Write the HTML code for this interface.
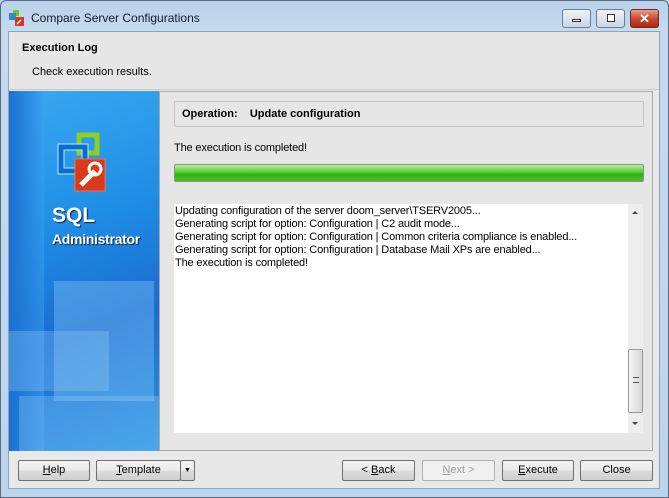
<!DOCTYPE html>
<html><head><style>
*{margin:0;padding:0;box-sizing:border-box}
body{width:669px;height:498px;overflow:hidden;font-family:"Liberation Sans",sans-serif;font-size:11px;color:#000;position:relative;
background:linear-gradient(180deg,#b9d1ea 0,#c6daee 30px,#bcd4ec 100%);}
.frame{position:absolute;left:0;top:0;width:669px;height:498px;border:1px solid #5a6a80;border-radius:6px 6px 0 0}
.title{position:absolute;left:31px;top:11px;font-size:12px;color:#101a28}
.wb{position:absolute;top:9px;height:19px;border:1px solid #6c7c90;border-radius:3px;background:linear-gradient(#eef3f9,#c9d6e6)}
.client{position:absolute;left:8px;top:31px;width:652px;height:458px;background:#e8e8e8;border:1px solid #8ea3bd}
.hdr{position:absolute;left:0;top:0;width:650px;height:58px;background:#e6e6e6;border-bottom:1px solid #c8c8c8}
.side{position:absolute;left:0;top:59px;width:150px;height:360px;background:linear-gradient(160deg,#3aa8f0 0%,#1f90e6 35%,#1a6cd0 65%,#2a94e4 100%);overflow:hidden}
.main{position:absolute;left:150px;top:59px;width:494px;height:360px;border:1px solid #a8a8a8;background:#e6e6e6}
.btn{position:absolute;top:428px;height:21px;border:1px solid #707070;border-radius:2px;background:linear-gradient(#f2f2f2 0,#ebebeb 50%,#dcdcdc 51%,#cfcfcf 100%);text-align:center;line-height:19px;font-size:11px}
.dis{color:#a0a0a0;border-color:#b0b0b0;background:#f0f0f0}
.log{letter-spacing:-0.15px}
</style></head><body>
<div class="frame"></div>
<svg style="position:absolute;left:9px;top:10px" width="16" height="16"><rect x="4" y="0" width="6" height="6" fill="#7cc020"/><rect x="0" y="3" width="7" height="7" fill="#2a8ad8"/><rect x="6" y="7" width="9" height="9" fill="#d83820"/><path d="M8 14l4-4" stroke="#fff" stroke-width="1.5"/></svg>
<div class="title">Compare Server Configurations</div>
<div class="wb" style="left:562px;width:29px"><div style="position:absolute;left:9px;top:9px;width:9px;height:3px;border:1px solid #333;background:#fff"></div></div>
<div class="wb" style="left:596px;width:29px"><div style="position:absolute;left:10px;top:4px;width:8px;height:8px;border:1px solid #333;background:#fff"></div></div>
<div class="wb" style="left:630px;width:29px;border-color:#6b2a20;background:linear-gradient(#e8a090,#c84a30 50%,#b02810)"><div style="color:#fff;font-weight:bold;font-size:13px;text-align:center;line-height:17px">✕</div></div>
<div class="client">
<div class="hdr">
<div style="position:absolute;left:13px;top:10px;font-weight:bold;font-size:11px">Execution Log</div>
<div style="position:absolute;left:23px;top:34px">Check execution results.</div>
</div>
<div class="side">
<div style="position:absolute;left:0;top:0;width:35px;height:360px;background:linear-gradient(90deg,#1a70d0,rgba(60,160,240,.5))"></div>
<div style="position:absolute;left:45px;top:190px;width:100px;height:120px;background:rgba(150,210,250,.35)"></div>
<div style="position:absolute;left:0;top:240px;width:100px;height:60px;background:rgba(150,210,250,.3)"></div>
<div style="position:absolute;left:10px;top:305px;width:140px;height:55px;background:rgba(150,210,250,.3)"></div>
<svg style="position:absolute;left:44px;top:40px" width="58" height="64"><rect x="26" y="4" width="18" height="18" fill="none" stroke="#8ecf20" stroke-width="5"/><rect x="8" y="16" width="24" height="24" fill="none" stroke="#bfe6ff" stroke-width="7"/><rect x="8" y="16" width="24" height="24" fill="none" stroke="#0a6ed0" stroke-width="5"/><rect x="22" y="28" width="30" height="32" fill="#d83a1a" stroke="#f07050" stroke-width="1"/><path d="M28 54l14-14" stroke="#fff" stroke-width="5"/><circle cx="42" cy="38" r="6" fill="none" stroke="#fff" stroke-width="3"/></svg>
<div style="position:absolute;left:43px;top:113px;color:#fff;font-weight:bold;font-size:21px;text-shadow:1px 1px 1px #124">SQL</div>
<div style="position:absolute;left:43px;top:140px;color:#fff;font-weight:bold;font-size:14px;letter-spacing:-.3px;text-shadow:1px 1px 1px #124">Administrator</div>
</div>
<div class="main">
<div style="position:absolute;left:14px;top:9px;width:470px;height:26px;border:1px solid #c4c4c4;border-radius:2px;background:#e6e6e6;font-weight:bold;line-height:24px;padding-left:7px">Operation:&nbsp;&nbsp;&nbsp;&nbsp;Update configuration</div>
<div style="position:absolute;left:14px;top:50px" class="log">The execution is completed!</div>
<div style="position:absolute;left:14px;top:72px;width:470px;height:18px;border:1px solid #909090;border-radius:2px;background:linear-gradient(#b8f0a0,#50d030 45%,#30b010 60%,#50c030)"></div>
<div class="log" style="position:absolute;left:14px;top:112px;width:469px;height:229px;background:#fff;line-height:13px;padding:1px 0 0 1px">
Updating configuration of the server doom_server\TSERV2005...<br>Generating script for option: Configuration | C2 audit mode...<br>Generating script for option: Configuration | Common criteria compliance is enabled...<br>Generating script for option: Configuration | Database Mail XPs are enabled...<br>The execution is completed!
<div style="position:absolute;right:0;top:0;width:15px;height:229px;background:#eeeeee">
<div style="position:absolute;left:4px;top:7px;border:3px solid transparent;border-bottom:3px solid #444;border-top:0"></div>
<div style="position:absolute;left:0;top:145px;width:15px;height:64px;border:1px solid #999;border-radius:2px;background:linear-gradient(90deg,#f4f4f4,#d8d8d8)"><div style="position:absolute;left:4px;top:27px;width:6px;height:6px;border-top:1px solid #555;border-bottom:1px solid #555"></div></div>
<div style="position:absolute;left:4px;top:218px;border:3px solid transparent;border-top:3px solid #444;border-bottom:0"></div>
</div>
</div>
</div>
<div class="btn" style="left:9px;width:72px"><u>H</u>elp</div>
<div class="btn" style="left:87px;width:85px"><u>T</u>emplate</div>
<div class="btn" style="left:171px;width:15px;font-size:7px">▼</div>
<div class="btn" style="left:333px;width:73px">&lt; <u>B</u>ack</div>
<div class="btn dis" style="left:413px;width:73px"><u>N</u>ext &gt;</div>
<div class="btn" style="left:493px;width:72px"><u>E</u>xecute</div>
<div class="btn" style="left:571px;width:73px">Close</div>
</div>
</body></html>
